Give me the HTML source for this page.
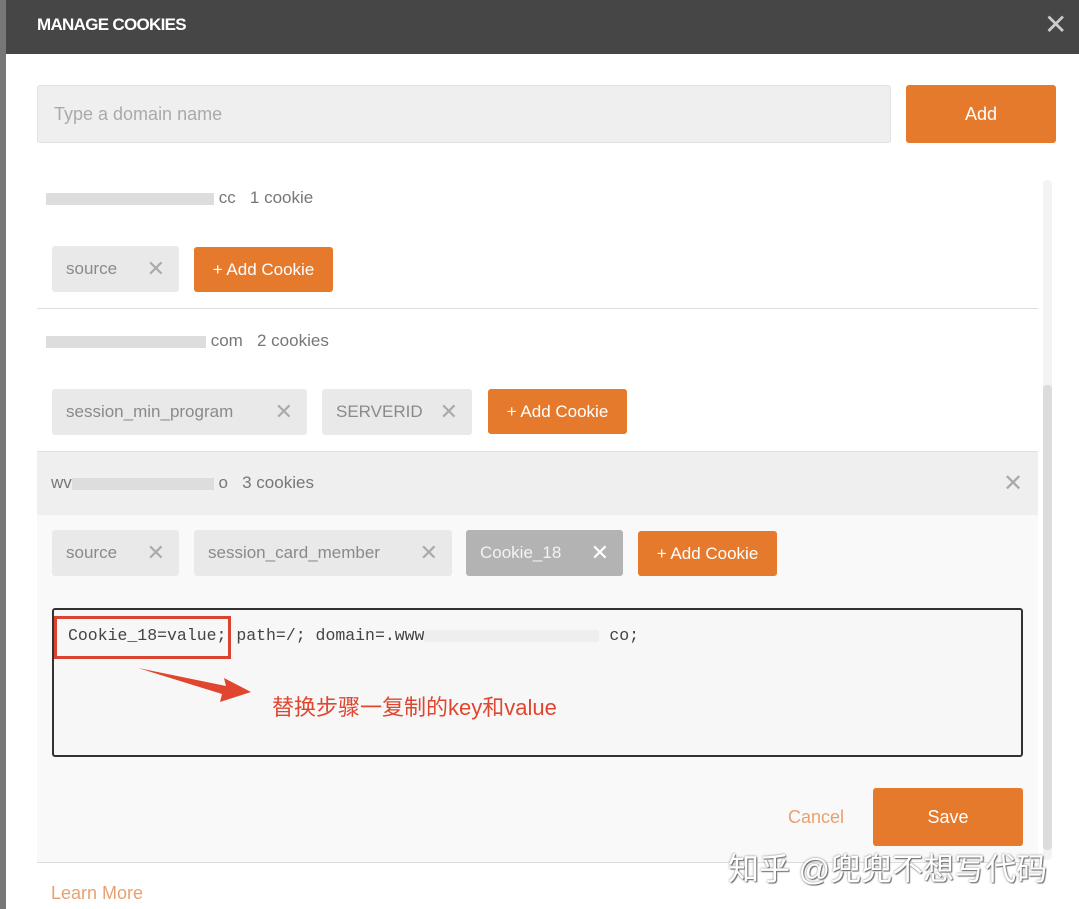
<!DOCTYPE html>
<html><head><meta charset="utf-8"><style>
*{margin:0;padding:0;box-sizing:border-box}
body{width:1079px;height:909px;background:#fff;position:relative;overflow:hidden;font-family:"Liberation Sans","Noto Sans CJK SC",sans-serif}
.a{position:absolute}
.chip{position:absolute;height:46px;background:#e9e9e9;border-radius:3px;color:#8a8a8a;font-size:17px;line-height:46px;padding-left:14px}
.chip .x{position:absolute;right:14px;top:0;font-size:22px;color:#aaa}
.btn{position:absolute;background:#e67a2c;color:#fff;border-radius:3px;text-align:center;font-size:17px}
.dom{position:absolute;font-size:17px;color:#777}
.blur{display:inline-block;height:12px;background:#ddd;vertical-align:middle}
</style></head><body>
<div class="a" style="left:0;top:0;width:6px;height:909px;background:#777"></div>
<div class="a" style="left:6px;top:0;width:1073px;height:54px;background:#464646"></div>
<div class="a" style="left:37px;top:15px;color:#fff;font-size:17px;font-weight:bold;letter-spacing:-0.7px">MANAGE COOKIES</div>
<div class="a" style="left:1044px;top:8px;color:#ccc;font-size:28px">✕</div>
<div class="a" style="left:37px;top:85px;width:854px;height:58px;background:#efefef;border:1px solid #e2e2e2;border-radius:3px;color:#aaa;font-size:18px;line-height:56px;padding-left:16px">Type a domain name</div>
<div class="btn" style="left:906px;top:85px;width:150px;height:58px;line-height:58px;font-size:18px">Add</div>
<div class="a" style="left:1043px;top:180px;width:9px;height:680px;background:#f3f3f3;border-radius:4px"></div>
<div class="a" style="left:1043px;top:385px;width:9px;height:465px;background:#dcdcdc;border-radius:4px"></div>

<div class="dom" style="left:46px;top:188px"><span class="blur" style="width:168px"></span> cc &nbsp; 1 cookie</div>
<div class="chip" style="left:52px;top:246px;width:127px">source<span class="x">✕</span></div>
<div class="btn" style="left:194px;top:247px;width:139px;height:45px;line-height:45px">+ Add Cookie</div>
<div class="a" style="left:37px;top:308px;width:1001px;height:1px;background:#ddd"></div>

<div class="dom" style="left:46px;top:331px"><span class="blur" style="width:160px"></span> com &nbsp; 2 cookies</div>
<div class="chip" style="left:52px;top:389px;width:255px">session_min_program<span class="x">✕</span></div>
<div class="chip" style="left:322px;top:389px;width:150px">SERVERID<span class="x">✕</span></div>
<div class="btn" style="left:488px;top:389px;width:139px;height:45px;line-height:45px">+ Add Cookie</div>

<div class="a" style="left:37px;top:451px;width:1001px;height:64px;background:#efefef;border-top:1px solid #e0e0e0"></div>
<div class="a" style="left:37px;top:515px;width:1001px;height:347px;background:#f9f9f9"></div>
<div class="a" style="left:37px;top:862px;width:1001px;height:1px;background:#ddd"></div>
<div class="dom" style="left:51px;top:473px">wv<span class="blur" style="width:142px"></span> o &nbsp; 3 cookies</div>
<div class="a" style="left:1003px;top:469px;color:#aaa;font-size:24px">✕</div>
<div class="chip" style="left:52px;top:530px;width:127px">source<span class="x">✕</span></div>
<div class="chip" style="left:194px;top:530px;width:258px">session_card_member<span class="x">✕</span></div>
<div class="chip" style="left:466px;top:530px;width:157px;background:#b3b3b3;color:#f3f3f3">Cookie_18<span class="x" style="color:#fff">✕</span></div>
<div class="btn" style="left:638px;top:531px;width:139px;height:45px;line-height:45px">+ Add Cookie</div>

<div class="a" style="left:52px;top:608px;width:971px;height:149px;background:#f7f7f7;border:2px solid #333;border-radius:3px"></div>
<div class="a" style="left:68px;top:626px;font-family:'Liberation Mono',monospace;font-size:16.5px;color:#444">Cookie_18=value; path=/; domain=.www<span class="blur" style="width:175px;background:#eee"></span> co;</div>
<div class="a" style="left:54px;top:616px;width:177px;height:43px;border:3px solid #d9432f"></div>
<svg class="a" style="left:136px;top:664px" width="120" height="40"><polygon points="2,4 90,22 88,14 115,28 84,38 86,30" fill="#e0452f"/></svg>
<div class="a" style="left:272px;top:690px;color:#e0452f;font-size:22px">替换步骤一复制的key和value</div>

<div class="a" style="left:788px;top:807px;color:#e9a070;font-size:18px">Cancel</div>
<div class="btn" style="left:873px;top:788px;width:150px;height:58px;line-height:58px;font-size:18px">Save</div>
<div class="a" style="left:728px;top:844px;color:#fff;font-size:31px;text-shadow:0 0 2px #777,1px 1px 1px #666">知乎 @兜兜不想写代码</div>
<div class="a" style="left:51px;top:883px;color:#e9a070;font-size:18px">Learn More</div>
</body></html>
